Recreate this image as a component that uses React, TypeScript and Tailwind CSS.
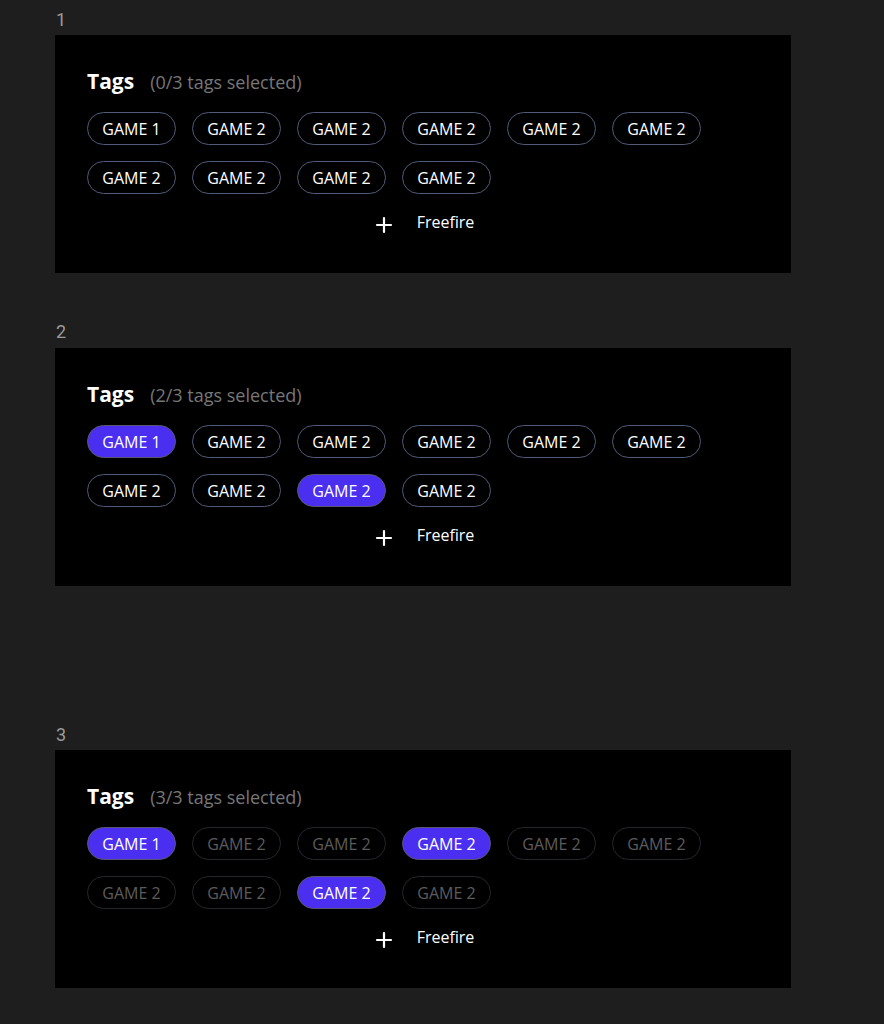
import { Plus } from "lucide-react";

type TagState = "idle" | "selected" | "disabled";

const tags = ["GAME 1", "GAME 2", "GAME 2", "GAME 2", "GAME 2", "GAME 2", "GAME 2", "GAME 2", "GAME 2", "GAME 2"];

function Chip({ label, state }: { label: string; state: TagState }) {
  const styles = {
    idle: "border-[#4f5b78] text-white bg-black",
    selected: "border-[#5a5670] bg-[#4b2ff0] text-white",
    disabled: "border-[#26272c] text-[#5c5c5c] bg-black",
  }[state];
  return (
    <button className={`w-[89px] h-[33px] rounded-full border text-[16px] leading-none flex items-center justify-center ${styles}`}>
      {label}
    </button>
  );
}

function TagPanel({ selected }: { selected: number[] }) {
  const full = selected.length >= 3;
  return (
    <div className="w-[736px] h-[238px] bg-black pl-8 pr-8 pt-[33px]">
      <div className="flex items-center gap-[16px] h-[28px]">
        <h2 className="text-[21px] font-bold text-white">Tags</h2>
        <span className="text-[18px] text-[#777777]">({selected.length}/3 tags selected)</span>
      </div>
      <div className="mt-4 flex flex-wrap gap-4">
        {tags.map((t, i) => (
          <Chip
            key={i}
            label={t}
            state={selected.includes(i) ? "selected" : full ? "disabled" : "idle"}
          />
        ))}
      </div>
      <div className="mt-[14px] h-[28px] flex items-center justify-center gap-[21px]">
        <Plus className="w-[24px] h-[24px] text-white mt-[5px]" strokeWidth={2.2} />
        <span className="text-[16px] text-white">Freefire</span>
      </div>
    </div>
  );
}

export default function App() {
  return (
    <div className="min-h-screen bg-[#1e1e1e] pl-[55px] pt-[8px] pb-10" style={{ fontFamily: '"Open Sans", "Noto Sans", sans-serif' }}>
      <div className="text-[18px] leading-[24px] text-[#9a9a9a] mb-[3px] pl-[1px]" style={{ fontFamily: "Roboto, sans-serif" }}>1</div>
      <TagPanel selected={[]} />
      <div className="mt-[47px] text-[18px] leading-[24px] text-[#9a9a9a] mb-[4px] pl-[1px]" style={{ fontFamily: "Roboto, sans-serif" }}>2</div>
      <TagPanel selected={[0, 8]} />
      <div className="mt-[137px] text-[18px] leading-[24px] text-[#9a9a9a] mb-[3px] pl-[1px]" style={{ fontFamily: "Roboto, sans-serif" }}>3</div>
      <TagPanel selected={[0, 3, 8]} />
    </div>
  );
}
